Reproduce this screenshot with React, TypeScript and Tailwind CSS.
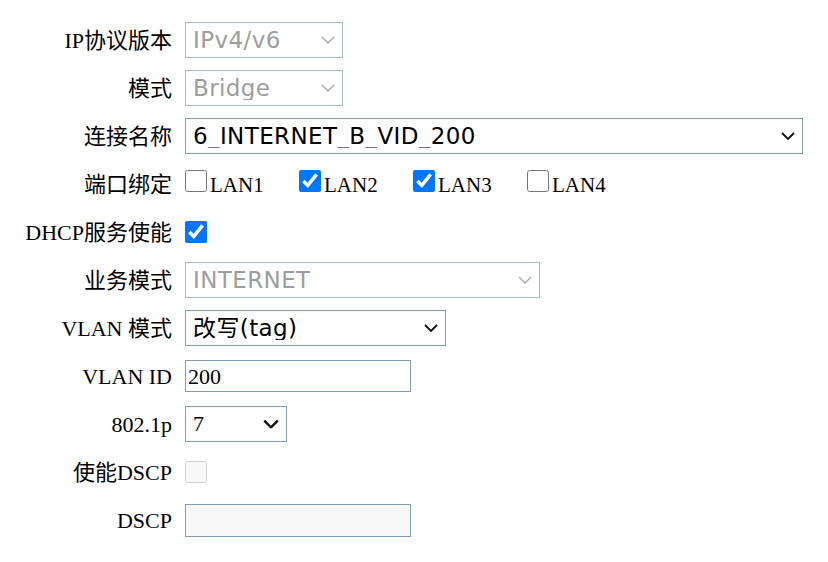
import React from 'react';

const labelFont = "font-['Liberation_Serif','Noto_Sans_CJK_SC',serif]";
const sansFont = "font-['DejaVu_Sans','Noto_Sans_CJK_SC',sans-serif]";

type SelectProps = {
  value: string;
  width: string;
  disabled?: boolean;
  serif?: boolean;
};

function Chevron({ disabled, big }: { disabled?: boolean; big?: boolean }) {
  return (
    <svg
      viewBox="0 0 14 8"
      className={`pointer-events-none absolute top-1/2 right-2 -translate-y-1/2 ${big ? 'h-[9px] w-[16px]' : 'h-[8px] w-[14px]'}`}
      fill="none"
      stroke={disabled ? '#a6a6a6' : '#111'}
      strokeWidth={disabled ? 1.3 : big ? 2.1 : 1.8}
    >
      <path d="M1 1l6 6 6-6" />
    </svg>
  );
}

function Select({ value, width, disabled, serif }: SelectProps) {
  return (
    <div className={`relative ${width}`}>
      <select
        defaultValue={value}
        disabled={disabled}
        className={`h-9 w-full appearance-none border bg-white pl-[7px] leading-none ${
          serif ? `text-[22px] ${labelFont}` : `text-[23px] tracking-[0.4px] ${sansFont}`
        } ${disabled ? 'border-[#abbdd2] text-[#9d9d9d]' : 'border-[#7f9db9] text-black'}`}
      >
        <option value={value}>{value}</option>
      </select>
      <Chevron disabled={disabled} big={serif} />
    </div>
  );
}

function Row({ label, children }: { label: string; children: React.ReactNode }) {
  return (
    <>
      <div className={`flex h-12 items-center justify-end text-[22px] text-black ${labelFont}`}>{label}</div>
      <div className="flex h-12 items-center">{children}</div>
    </>
  );
}

const ports = [
  { name: 'LAN1', checked: false },
  { name: 'LAN2', checked: true },
  { name: 'LAN3', checked: true },
  { name: 'LAN4', checked: false },
];

export default function App() {
  return (
    <div className="min-h-[562px] bg-white pt-4">
      <div className="grid grid-cols-[172px_1fr] gap-x-[13px]">
        <Row label="IP协议版本">
          <Select value="IPv4/v6" width="w-[158px]" disabled />
        </Row>
        <Row label="模式">
          <Select value="Bridge" width="w-[158px]" disabled />
        </Row>
        <Row label="连接名称">
          <Select value="6_INTERNET_B_VID_200" width="w-[618px]" />
        </Row>
        <Row label="端口绑定">
          <div className="flex pt-1">
            {ports.map((p) => (
              <label key={p.name} className={`flex w-[114px] items-baseline text-[21px] ${labelFont}`}>
                <input
                  type="checkbox"
                  defaultChecked={p.checked}
                  className="mr-[3px] mb-[-2px] h-[22px] w-[22px] accent-[#0075ff]"
                />
                {p.name}
              </label>
            ))}
          </div>
        </Row>
        <Row label="DHCP服务使能">
          <input type="checkbox" defaultChecked className="h-[22px] w-[22px] accent-[#0075ff]" />
        </Row>
        <Row label="业务模式">
          <Select value="INTERNET" width="w-[355px]" disabled />
        </Row>
        <Row label="VLAN 模式">
          <Select value="改写(tag)" width="w-[261px]" />
        </Row>
        <Row label="VLAN ID">
          <input
            type="text"
            defaultValue="200"
            className={`h-8 w-[226px] border border-[#7f9db9] px-[2px] text-[22px] text-black ${labelFont}`}
          />
        </Row>
        <Row label="802.1p">
          <Select value="7" width="w-[102px]" serif />
        </Row>
        <Row label="使能DSCP">
          <input type="checkbox" disabled className="h-[22px] w-[22px]" />
        </Row>
        <Row label="DSCP">
          <input
            type="text"
            disabled
            className="h-[33px] w-[226px] border border-[#7f9db9] bg-[#f8f8f8]"
          />
        </Row>
      </div>
    </div>
  );
}
